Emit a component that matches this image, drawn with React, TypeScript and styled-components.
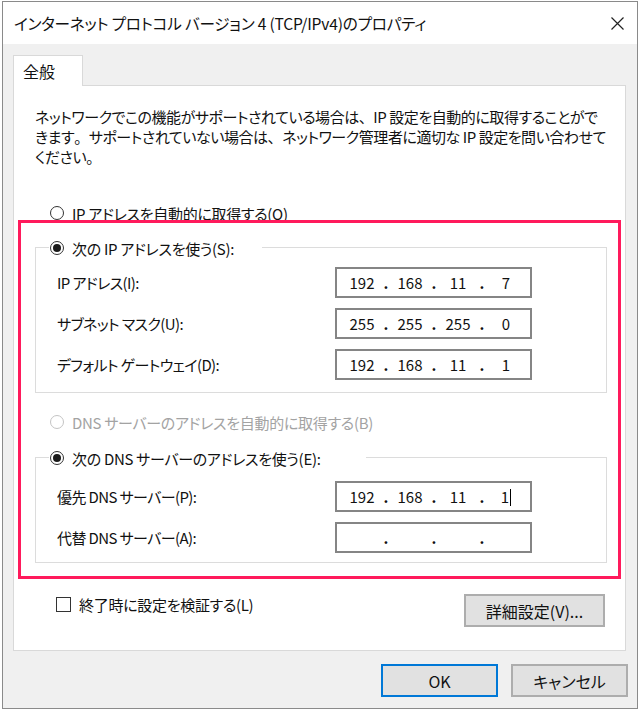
import React from 'react';
import styled, { createGlobalStyle } from 'styled-components';

const GlobalStyle = createGlobalStyle`
  html, body {
    margin: 0;
    padding: 0;
    background: #ffffff;
  }
  body {
    font-family: "Noto Sans CJK JP", "Noto Sans", sans-serif;
    font-size: 15px;
    color: #111;
    font-feature-settings: "palt";
  }
`;

const Window = styled.div`
  box-sizing: border-box;
  width: 636px;
  height: 708px;
  margin: 1px 0 0 2px;
  border: 1px solid #8a8a8a;
  background: #f0f0f0;
  display: flex;
  flex-direction: column;
`;

const TitleBar = styled.div`
  flex-shrink: 0;
  height: 42px;
  background: #fff;
  display: flex;
  align-items: center;
  justify-content: space-between;
  padding: 0 13px 0 11px;
`;

const Title = styled.span`
  font-size: 15.6px;
  letter-spacing: -0.2px;
  white-space: nowrap;
`;

const Body = styled.div`
  display: flex;
  flex-direction: column;
  padding: 11px 11px 0 10px;
`;

const TabStrip = styled.div`
  display: flex;
`;

const Tab = styled.div`
  position: relative;
  z-index: 1;
  box-sizing: border-box;
  width: 70px;
  height: 31px;
  margin-bottom: -1px;
  padding: 1px 0 0 9px;
  border: 1px solid #d9d9d9;
  border-bottom: none;
  background: #fff;
  font-size: 16px;
  line-height: 28px;
`;

const Panel = styled.div`
  box-sizing: border-box;
  height: 566px;
  border: 1px solid #d9d9d9;
  background: #fff;
  padding: 21px 4px 0 4px;
  display: flex;
  flex-direction: column;
`;

const Description = styled.p`
  margin: 0 0 0 17px;
  line-height: 20px;
  letter-spacing: -0.45px;
  white-space: nowrap;
`;

const Line = styled.span`
  display: block;
`;

/* full-width punctuation keeps its em box, as in the Windows UI font */
const Punct = styled.span`
  font-feature-settings: normal;
`;

const OptionRow = styled.label<{ $top: number; $left: number; $disabled?: boolean }>`
  display: flex;
  align-items: center;
  gap: 8px;
  height: 16px;
  margin: ${(p) => p.$top}px 0 0 ${(p) => p.$left}px;
  color: ${(p) => (p.$disabled ? '#a3a3a3' : '#111')};
  letter-spacing: -0.3px;
  white-space: nowrap;
`;

const Radio = styled.span<{ $checked?: boolean; $disabled?: boolean }>`
  position: relative;
  box-sizing: border-box;
  flex-shrink: 0;
  width: 14px;
  height: 14px;
  border-radius: 50%;
  border: 1px solid ${(p) => (p.$disabled ? '#c4c4c4' : '#333')};
  background: #fff;

  &::after {
    content: '';
    display: ${(p) => (p.$checked ? 'block' : 'none')};
    position: absolute;
    left: 2px;
    top: 2px;
    width: 8px;
    height: 8px;
    border-radius: 50%;
    background: #1a1a1a;
  }
`;

const Highlight = styled.div`
  margin-top: -1px;
  border: 3px solid #ff1a5c;
  padding: 15px 11px 13px 14px;
`;

const Group = styled.fieldset<{ $top: number }>`
  margin: ${(p) => p.$top}px 0 0 0;
  padding: 0;
  min-width: 0;
  border: 1px solid #dcdcdc;
`;

const Legend = styled.legend<{ $gap: number }>`
  margin-left: 13px;
  padding: 0 ${(p) => p.$gap}px 0 1px;
  height: 18px;
`;

const LegendLabel = styled.span`
  display: inline-flex;
  align-items: center;
  gap: 8px;
  height: 18px;
  letter-spacing: -0.3px;
  white-space: nowrap;
`;

const FieldGrid = styled.div<{ $top: number; $bottom: number }>`
  display: grid;
  grid-template-columns: 278px 197px;
  row-gap: 10px;
  align-items: center;
  padding: ${(p) => p.$top}px 0 ${(p) => p.$bottom}px 21px;
`;

const FieldLabel = styled.span`
  letter-spacing: -0.6px;
  white-space: nowrap;
`;

const IpField = styled.div`
  box-sizing: border-box;
  display: flex;
  align-items: center;
  width: 197px;
  height: 31px;
  padding-left: 5px;
  border: 2px solid #858585;
  background: #fff;
`;

const Octet = styled.span`
  width: 40px;
  text-align: center;
  white-space: nowrap;
`;

const Dot = styled.span`
  width: 8px;
  text-align: center;
  font-weight: 700;
`;

const Caret = styled.span`
  display: inline-block;
  width: 1px;
  height: 17px;
  margin-left: 1px;
  background: #000;
  vertical-align: -3px;
`;

const Footer = styled.div`
  display: flex;
  justify-content: space-between;
  align-items: flex-start;
  margin-top: 15px;
  padding: 0 16px 0 38px;
`;

const CheckRow = styled.label`
  display: flex;
  align-items: center;
  gap: 8px;
  height: 18px;
  margin-top: 1px;
  letter-spacing: -0.3px;
  white-space: nowrap;
`;

const Checkbox = styled.span`
  box-sizing: border-box;
  width: 15px;
  height: 15px;
  border: 1px solid #333;
  background: #fff;
`;

const Button = styled.button<{ $width: number; $primary?: boolean }>`
  box-sizing: border-box;
  width: ${(p) => p.$width}px;
  height: 33px;
  padding: 0;
  border: 2px solid ${(p) => (p.$primary ? '#0078d7' : '#adadad')};
  background: #e1e1e1;
  font-family: inherit;
  font-size: 16px;
  color: #111;
  font-feature-settings: "palt";
`;

const DialogButtons = styled.div`
  display: flex;
  justify-content: flex-end;
  gap: 13px;
  margin: 13px -2px 0 0;
`;

const CloseIcon = () => (
  <svg width="13" height="13" viewBox="0 0 13 13">
    <path d="M0.5 0.5 L12.5 12.5 M12.5 0.5 L0.5 12.5" stroke="#222" strokeWidth="1.2" fill="none" />
  </svg>
);

const IpInput: React.FC<{ octets: string[]; caret?: boolean }> = ({ octets, caret }) => (
  <IpField>
    {octets.map((o, i) => (
      <React.Fragment key={i}>
        {i > 0 && <Dot>.</Dot>}
        <Octet>
          {o}
          {caret && i === 3 && <Caret />}
        </Octet>
      </React.Fragment>
    ))}
  </IpField>
);

export default function App() {
  return (
    <>
      <GlobalStyle />
      <Window>
        <TitleBar>
          <Title>インターネット プロトコル バージョン 4 (TCP/IPv4)のプロパティ</Title>
          <CloseIcon />
        </TitleBar>
        <Body>
          <TabStrip>
            <Tab>全般</Tab>
          </TabStrip>
          <Panel>
            <Description>
              <Line>
                ネットワークでこの機能がサポートされている場合は<Punct>、</Punct>IP 設定を自動的に取得することがで
              </Line>
              <Line>
                きます<Punct>。</Punct>サポートされていない場合は<Punct>、</Punct>ネットワーク管理者に適切な IP 設定を問い合わせて
              </Line>
              <Line>
                ください<Punct>。</Punct>
              </Line>
            </Description>

            <OptionRow $top={38} $left={32}>
              <Radio />
              IP アドレスを自動的に取得する(O)
            </OptionRow>

            <Highlight>
              <Group $top={0}>
                <Legend $gap={28}>
                  <LegendLabel>
                    <Radio $checked />
                    次の IP アドレスを使う(S):
                  </LegendLabel>
                </Legend>
                <FieldGrid $top={11} $bottom={12}>
                  <FieldLabel>IP アドレス(I):</FieldLabel>
                  <IpInput octets={['192', '168', '11', '7']} />
                  <FieldLabel>サブネット マスク(U):</FieldLabel>
                  <IpInput octets={['255', '255', '255', '0']} />
                  <FieldLabel>デフォルト ゲートウェイ(D):</FieldLabel>
                  <IpInput octets={['192', '168', '11', '1']} />
                </FieldGrid>
              </Group>

              <OptionRow $top={21} $left={15} $disabled>
                <Radio $disabled />
                DNS サーバーのアドレスを自動的に取得する(B)
              </OptionRow>

              <Group $top={18}>
                <Legend $gap={45}>
                  <LegendLabel>
                    <Radio $checked />
                    次の DNS サーバーのアドレスを使う(E):
                  </LegendLabel>
                </Legend>
                <FieldGrid $top={15} $bottom={9}>
                  <FieldLabel>優先 DNS サーバー(P):</FieldLabel>
                  <IpInput octets={['192', '168', '11', '1']} caret />
                  <FieldLabel>代替 DNS サーバー(A):</FieldLabel>
                  <IpInput octets={['', '', '', '']} />
                </FieldGrid>
              </Group>
            </Highlight>

            <Footer>
              <CheckRow>
                <Checkbox />
                終了時に設定を検証する(L)
              </CheckRow>
              <Button $width={141}>詳細設定(V)...</Button>
            </Footer>
          </Panel>
          <DialogButtons>
            <Button $width={117} $primary>OK</Button>
            <Button $width={117}>キャンセル</Button>
          </DialogButtons>
        </Body>
      </Window>
    </>
  );
}
